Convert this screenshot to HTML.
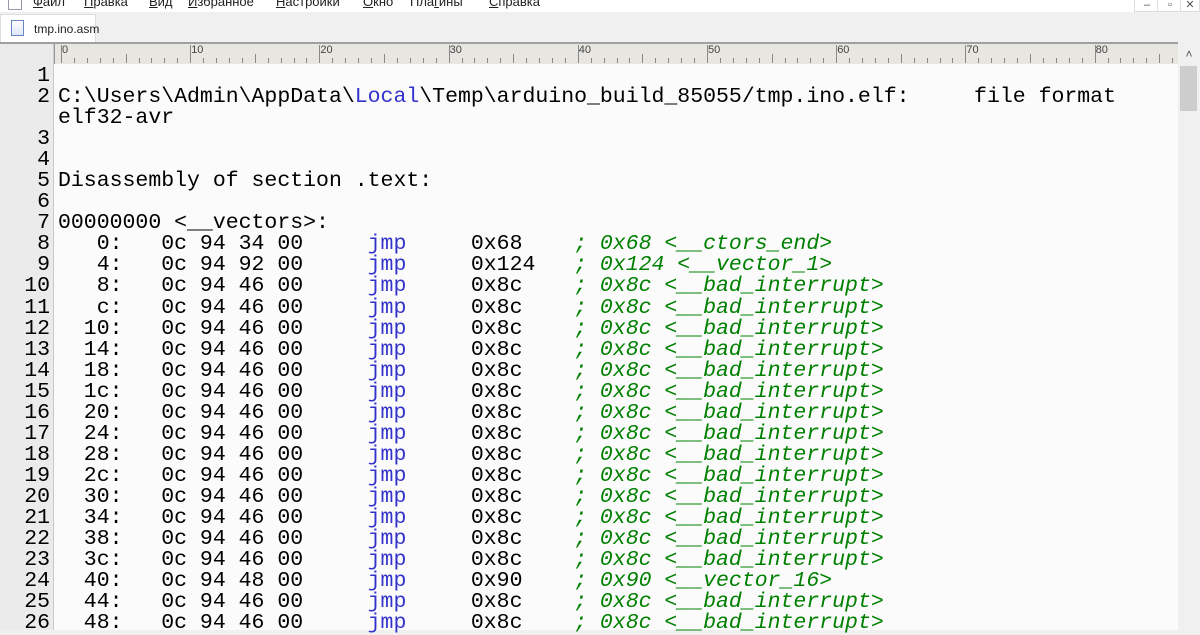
<!DOCTYPE html>
<html><head><meta charset="utf-8"><style>
*{margin:0;padding:0;box-sizing:border-box}
body{width:1200px;height:630px;overflow:hidden;background:#f0f0f0;font-family:"Liberation Sans","DejaVu Sans",sans-serif;position:relative}
.menu{position:absolute;top:-6px;left:0;width:1200px;height:18px;background:#fff;font-size:13px;color:#222}
.menu span{position:absolute;top:0}
.menu u{text-decoration:underline}
.wb{position:absolute;top:0;width:26px;height:12px;border:1px solid #ddd;border-top:none;background:#fff;font-size:11px;text-align:center;line-height:10px;color:#555}
.tabbar{position:absolute;top:12px;left:0;width:1200px;height:30px;background:#f0f0f0}
.tab{position:absolute;left:0;top:2px;width:96px;height:28px;background:#fff;border:1px solid #ddd;border-bottom:none;font-size:12px;color:#222}
.tab .ic{position:absolute;left:10px;top:5px;width:13px;height:16px;border:1px solid #6a86c8;background:linear-gradient(#fff,#dde6f8)}
.tab .t{position:absolute;left:33px;top:7px}
.hline{position:absolute;top:42px;left:0;width:1178px;height:2px;background:#a0a0a0}
.ruler{position:absolute;top:44px;left:54px;width:1124px;height:20px;background:#e8e6e1;border-left:1px solid #999}
.ruler .n{position:absolute;top:0;font-size:11px;color:#444}
.ruler .tk{position:absolute;bottom:1px;width:1px;background:#888}
.gut{position:absolute;top:44px;left:0;width:54px;height:586px;background:#ebebeb;border-right:1px solid #c8c8c8}
.ed{position:absolute;top:64px;left:54px;width:1124px;height:566px;background:#fbfbfb}
.ln{position:absolute;top:66px;left:0;width:50px;text-align:right;font-family:"Liberation Mono",monospace;font-size:21.5px;line-height:21.05px;white-space:pre;color:#000}
.txt{position:absolute;top:66px;left:58px;font-family:"Liberation Mono",monospace;font-size:21.5px;line-height:21.05px;white-space:pre;color:#000;tab-size:8}
.b{color:#3333cc}.g{color:#008000;font-style:italic}
.sb{position:absolute;top:64px;left:1178px;width:22px;height:566px;background:#f0f0f0}
.sb .th{position:absolute;left:2px;top:2px;width:17px;height:45px;background:#cdcdcd}
.sbt{position:absolute;left:1178px;top:44px;width:22px;height:20px;background:#f0f0f0;font-size:12px;text-align:center;color:#555;line-height:20px}
</style></head><body>
<div class="menu">
<span style="left:8px;width:14px;height:12px;top:4px;border:1px solid #99a;background:#fff"></span>
<span style="left:33px"><u>Ф</u>айл</span><span style="left:84px"><u>П</u>равка</span><span style="left:149px"><u>В</u>ид</span><span style="left:188px"><u>И</u>збранное</span><span style="left:276px"><u>Н</u>астройки</span><span style="left:363px"><u>О</u>кно</span><span style="left:410px">Пла<u>г</u>ины</span><span style="left:489px"><u>С</u>правка</span>
</div>
<div class="wb" style="left:1134px">–</div><div class="wb" style="left:1157px">▫</div><div class="wb" style="left:1180px;width:20px">✕</div>
<div class="tabbar"><div class="tab"><div class="ic"></div><div class="t">tmp.ino.asm</div></div></div>
<div class="hline"></div>
<div class="gut"></div>
<div class="ruler" id="r"></div>
<div class="sbt">˄</div>
<div class="ed"></div>
<div class="sb"><div class="th"></div></div>
<div class="ln">1
2

3
4
5
6
7
8
9
10
11
12
13
14
15
16
17
18
19
20
21
22
23
24
25
26</div>
<div class="txt">
C:\Users\Admin\AppData\<span class="b">Local</span>\Temp\arduino_build_85055/tmp.ino.elf:     file format
elf32-avr


Disassembly of section .text:

00000000 &lt;__vectors&gt;:
   0:	0c 94 34 00 	<span class="b">jmp</span>	0x68	<span class="g">; 0x68 &lt;__ctors_end&gt;</span>
   4:	0c 94 92 00 	<span class="b">jmp</span>	0x124	<span class="g">; 0x124 &lt;__vector_1&gt;</span>
   8:	0c 94 46 00 	<span class="b">jmp</span>	0x8c	<span class="g">; 0x8c &lt;__bad_interrupt&gt;</span>
   c:	0c 94 46 00 	<span class="b">jmp</span>	0x8c	<span class="g">; 0x8c &lt;__bad_interrupt&gt;</span>
  10:	0c 94 46 00 	<span class="b">jmp</span>	0x8c	<span class="g">; 0x8c &lt;__bad_interrupt&gt;</span>
  14:	0c 94 46 00 	<span class="b">jmp</span>	0x8c	<span class="g">; 0x8c &lt;__bad_interrupt&gt;</span>
  18:	0c 94 46 00 	<span class="b">jmp</span>	0x8c	<span class="g">; 0x8c &lt;__bad_interrupt&gt;</span>
  1c:	0c 94 46 00 	<span class="b">jmp</span>	0x8c	<span class="g">; 0x8c &lt;__bad_interrupt&gt;</span>
  20:	0c 94 46 00 	<span class="b">jmp</span>	0x8c	<span class="g">; 0x8c &lt;__bad_interrupt&gt;</span>
  24:	0c 94 46 00 	<span class="b">jmp</span>	0x8c	<span class="g">; 0x8c &lt;__bad_interrupt&gt;</span>
  28:	0c 94 46 00 	<span class="b">jmp</span>	0x8c	<span class="g">; 0x8c &lt;__bad_interrupt&gt;</span>
  2c:	0c 94 46 00 	<span class="b">jmp</span>	0x8c	<span class="g">; 0x8c &lt;__bad_interrupt&gt;</span>
  30:	0c 94 46 00 	<span class="b">jmp</span>	0x8c	<span class="g">; 0x8c &lt;__bad_interrupt&gt;</span>
  34:	0c 94 46 00 	<span class="b">jmp</span>	0x8c	<span class="g">; 0x8c &lt;__bad_interrupt&gt;</span>
  38:	0c 94 46 00 	<span class="b">jmp</span>	0x8c	<span class="g">; 0x8c &lt;__bad_interrupt&gt;</span>
  3c:	0c 94 46 00 	<span class="b">jmp</span>	0x8c	<span class="g">; 0x8c &lt;__bad_interrupt&gt;</span>
  40:	0c 94 48 00 	<span class="b">jmp</span>	0x90	<span class="g">; 0x90 &lt;__vector_16&gt;</span>
  44:	0c 94 46 00 	<span class="b">jmp</span>	0x8c	<span class="g">; 0x8c &lt;__bad_interrupt&gt;</span>
  48:	0c 94 46 00 	<span class="b">jmp</span>	0x8c	<span class="g">; 0x8c &lt;__bad_interrupt&gt;</span></div>
<script>
var r=document.getElementById('r'),h='';
for(var i=0;i<=86;i++){var x=6+i*12.92;var len=i%10==0?18:(i%5==0?9:5);h+='<div class="tk" style="left:'+x+'px;height:'+len+'px"></div>';if(i%10==0)h+='<div class="n" style="left:'+(x+1)+'px">'+i+'</div>';}
r.innerHTML=h;
</script>
</body></html>
